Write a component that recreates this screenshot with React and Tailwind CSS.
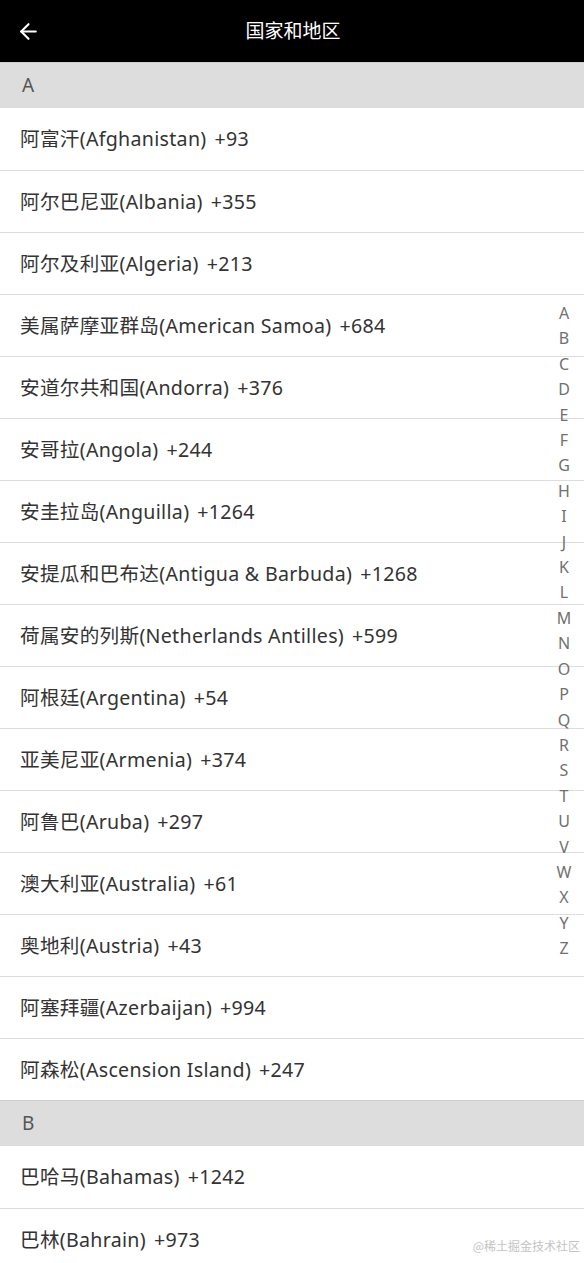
import { ArrowLeft } from 'lucide-react'

const sections = [
  {
    letter: 'A',
    items: [
      ['阿富汗', 'Afghanistan', '93'],
      ['阿尔巴尼亚', 'Albania', '355'],
      ['阿尔及利亚', 'Algeria', '213'],
      ['美属萨摩亚群岛', 'American Samoa', '684'],
      ['安道尔共和国', 'Andorra', '376'],
      ['安哥拉', 'Angola', '244'],
      ['安圭拉岛', 'Anguilla', '1264'],
      ['安提瓜和巴布达', 'Antigua & Barbuda', '1268'],
      ['荷属安的列斯', 'Netherlands Antilles', '599'],
      ['阿根廷', 'Argentina', '54'],
      ['亚美尼亚', 'Armenia', '374'],
      ['阿鲁巴', 'Aruba', '297'],
      ['澳大利亚', 'Australia', '61'],
      ['奥地利', 'Austria', '43'],
      ['阿塞拜疆', 'Azerbaijan', '994'],
      ['阿森松', 'Ascension Island', '247'],
    ],
  },
  {
    letter: 'B',
    items: [
      ['巴哈马', 'Bahamas', '1242'],
      ['巴林', 'Bahrain', '973'],
    ],
  },
]

const letters = 'ABCDEFGHIJKLMNOPQRSTUVWXYZ'.split('')

const App = () => {
  return (
    <div className="relative h-[1263px] overflow-hidden bg-white font-['Noto_Sans','Noto_Sans_CJK_SC',sans-serif]">
      <header className="h-[62px] bg-black text-white flex items-center relative">
        <ArrowLeft className="absolute left-[16px] top-[19px] w-[25px] h-[25px]" strokeWidth={2} />
        <h1 className="flex-1 text-center text-[19px] pl-[2px]">国家和地区</h1>
      </header>

      {sections.map((sec) => (
        <div key={sec.letter}>
          <div className="h-[46px] bg-[#dddddd] border-t border-[#cccccc] flex items-center px-[22px] text-[19px] text-[#555555]">
            {sec.letter}
          </div>
          {sec.items.map(([cn, en, code], i) => (
            <div
              key={en}
              className={`h-[62px] flex items-center px-[20px] text-[19.6px] tracking-[0.3px] text-[#333333] ${i > 0 ? 'border-t border-[#dddddd]' : ''}`}
            >
              <span>{cn}({en})</span>
              <span className="ml-[8px]">+{code}</span>
            </div>
          ))}
        </div>
      ))}

      <div className="absolute right-[10px] top-[301px] flex flex-col items-center text-[16px] text-[#707070] leading-[25.4px] w-[20px]">
        {letters.map((l) => (
          <span key={l}>{l}</span>
        ))}
      </div>

      <div className="absolute right-[4px] bottom-[8px] text-[12px] text-[#c4c4c4] font-['Noto_Sans_CJK_SC',sans-serif]">
        @稀土掘金技术社区
      </div>
    </div>
  )
}

export default App
